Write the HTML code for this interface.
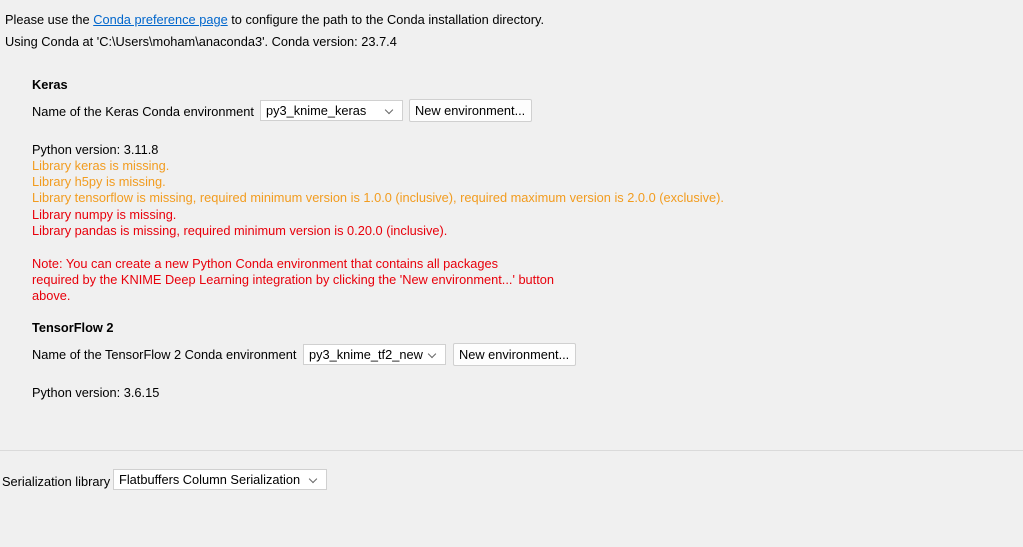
<!DOCTYPE html>
<html><head><style>
body{margin:0;width:1023px;height:547px;background:#f0f0f0;font-family:"Liberation Sans",sans-serif;font-size:12.8px;color:#000;position:relative;overflow:hidden}
.t{position:absolute;white-space:nowrap;line-height:16px}
a{color:#0066cc;text-decoration:underline}
.o{color:#f29c1f}.r{color:#e8000b}
.b{font-weight:bold}
.sel{position:absolute;background:#fff;border:1px solid #d0d0d0;height:21px;box-sizing:border-box;line-height:19px;padding-left:5px;white-space:nowrap}
.sel:after{content:"";position:absolute;right:10px;top:6px;width:5px;height:5px;border-right:1px solid #666;border-bottom:1px solid #666;transform:rotate(45deg)}
.btn{position:absolute;background:#fdfdfd;border:1px solid #d0d0d0;border-radius:2px;height:23px;box-sizing:border-box;line-height:21px;padding-left:5px;white-space:nowrap}
.hr{position:absolute;left:0;top:450px;width:1023px;height:1px;background:#dadada}
</style></head><body>
<div class="t" style="left:5px;top:12px">Please use the <a>Conda preference page</a> to configure the path to the Conda installation directory.</div>
<div class="t" style="left:5px;top:34px">Using Conda at 'C:\Users\moham\anaconda3'. Conda version: 23.7.4</div>
<div class="t b" style="left:32px;top:77px">Keras</div>
<div class="t" style="left:32px;top:104px">Name of the Keras Conda environment</div>
<div class="sel" style="left:260px;top:100px;width:143px">py3_knime_keras</div>
<div class="btn" style="left:409px;top:99px;width:123px">New environment...</div>
<div class="t" style="left:32px;top:142px">Python version: 3.11.8</div>
<div class="t o" style="left:32px;top:158px">Library keras is missing.</div>
<div class="t o" style="left:32px;top:174px">Library h5py is missing.</div>
<div class="t o" style="left:32px;top:190px">Library tensorflow is missing, required minimum version is 1.0.0 (inclusive), required maximum version is 2.0.0 (exclusive).</div>
<div class="t r" style="left:32px;top:207px">Library numpy is missing.</div>
<div class="t r" style="left:32px;top:223px">Library pandas is missing, required minimum version is 0.20.0 (inclusive).</div>
<div class="t r" style="left:32px;top:256px">Note: You can create a new Python Conda environment that contains all packages</div>
<div class="t r" style="left:32px;top:272px">required by the KNIME Deep Learning integration by clicking the 'New environment...' button</div>
<div class="t r" style="left:32px;top:288px">above.</div>
<div class="t b" style="left:32px;top:320px">TensorFlow 2</div>
<div class="t" style="left:32px;top:347px">Name of the TensorFlow 2 Conda environment</div>
<div class="sel" style="left:303px;top:344px;width:143px">py3_knime_tf2_new</div>
<div class="btn" style="left:453px;top:343px;width:123px">New environment...</div>
<div class="t" style="left:32px;top:385px">Python version: 3.6.15</div>
<div class="hr"></div>
<div class="t" style="left:2px;top:474px">Serialization library</div>
<div class="sel" style="left:113px;top:469px;width:214px">Flatbuffers Column Serialization</div>
</body></html>
